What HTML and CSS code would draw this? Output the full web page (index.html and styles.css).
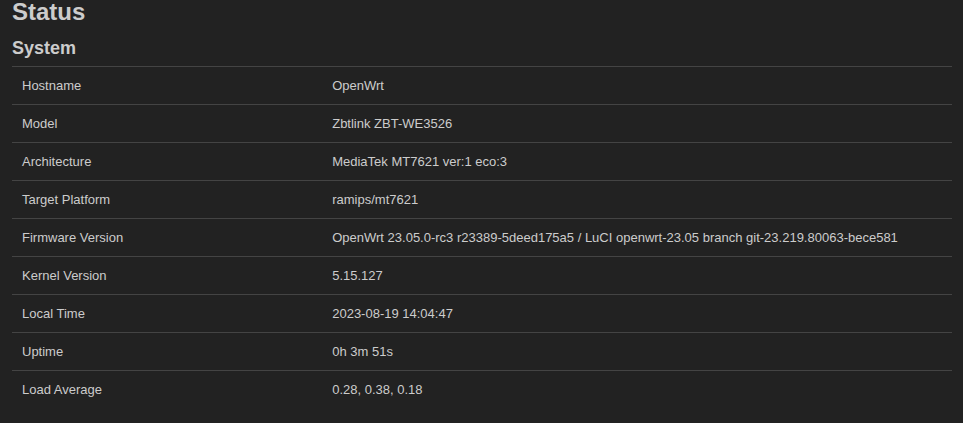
FILE: index.html
```html
<!DOCTYPE html>
<html>
<head>
<meta charset="utf-8">
<link rel="stylesheet" href="styles.css">
</head>
<body>
<div class="page">
  <h2 class="title">Status</h2>
  <h3 class="section">System</h3>
  <div class="table">
    <div class="row"><div class="key">Hostname</div><div class="val">OpenWrt</div></div>
    <div class="row"><div class="key">Model</div><div class="val">Zbtlink ZBT-WE3526</div></div>
    <div class="row"><div class="key">Architecture</div><div class="val">MediaTek MT7621 ver:1 eco:3</div></div>
    <div class="row"><div class="key">Target Platform</div><div class="val">ramips/mt7621</div></div>
    <div class="row"><div class="key">Firmware Version</div><div class="val">OpenWrt 23.05.0-rc3 r23389-5deed175a5 / LuCI openwrt-23.05 branch git-23.219.80063-bece581</div></div>
    <div class="row"><div class="key">Kernel Version</div><div class="val">5.15.127</div></div>
    <div class="row"><div class="key">Local Time</div><div class="val">2023-08-19 14:04:47</div></div>
    <div class="row"><div class="key">Uptime</div><div class="val">0h 3m 51s</div></div>
    <div class="row"><div class="key">Load Average</div><div class="val">0.28, 0.38, 0.18</div></div>
  </div>
</div>
</body>
</html>
```
FILE: styles.css
```css
html, body {
  margin: 0;
  padding: 0;
  background: #222222;
  color: #cccccc;
  font-family: "Liberation Sans", Arial, sans-serif;
}
.page {
  padding: 0 11px 0 12px;
}
.title {
  margin: 0;
  font-size: 24px;
  line-height: 24px;
  font-weight: bold;
  color: #cccccc;
}
.section {
  margin: 15px 0 9px;
  font-size: 18px;
  line-height: 18px;
  font-weight: bold;
  color: #cccccc;
}
.table {
  display: flex;
  flex-direction: column;
}
.row {
  display: grid;
  grid-template-columns: 33% 1fr;
  border-top: 1px solid #444444;
  height: 37px;
  align-items: center;
  font-size: 13px;
}
.key, .val {
  padding-left: 10px;
}
```
